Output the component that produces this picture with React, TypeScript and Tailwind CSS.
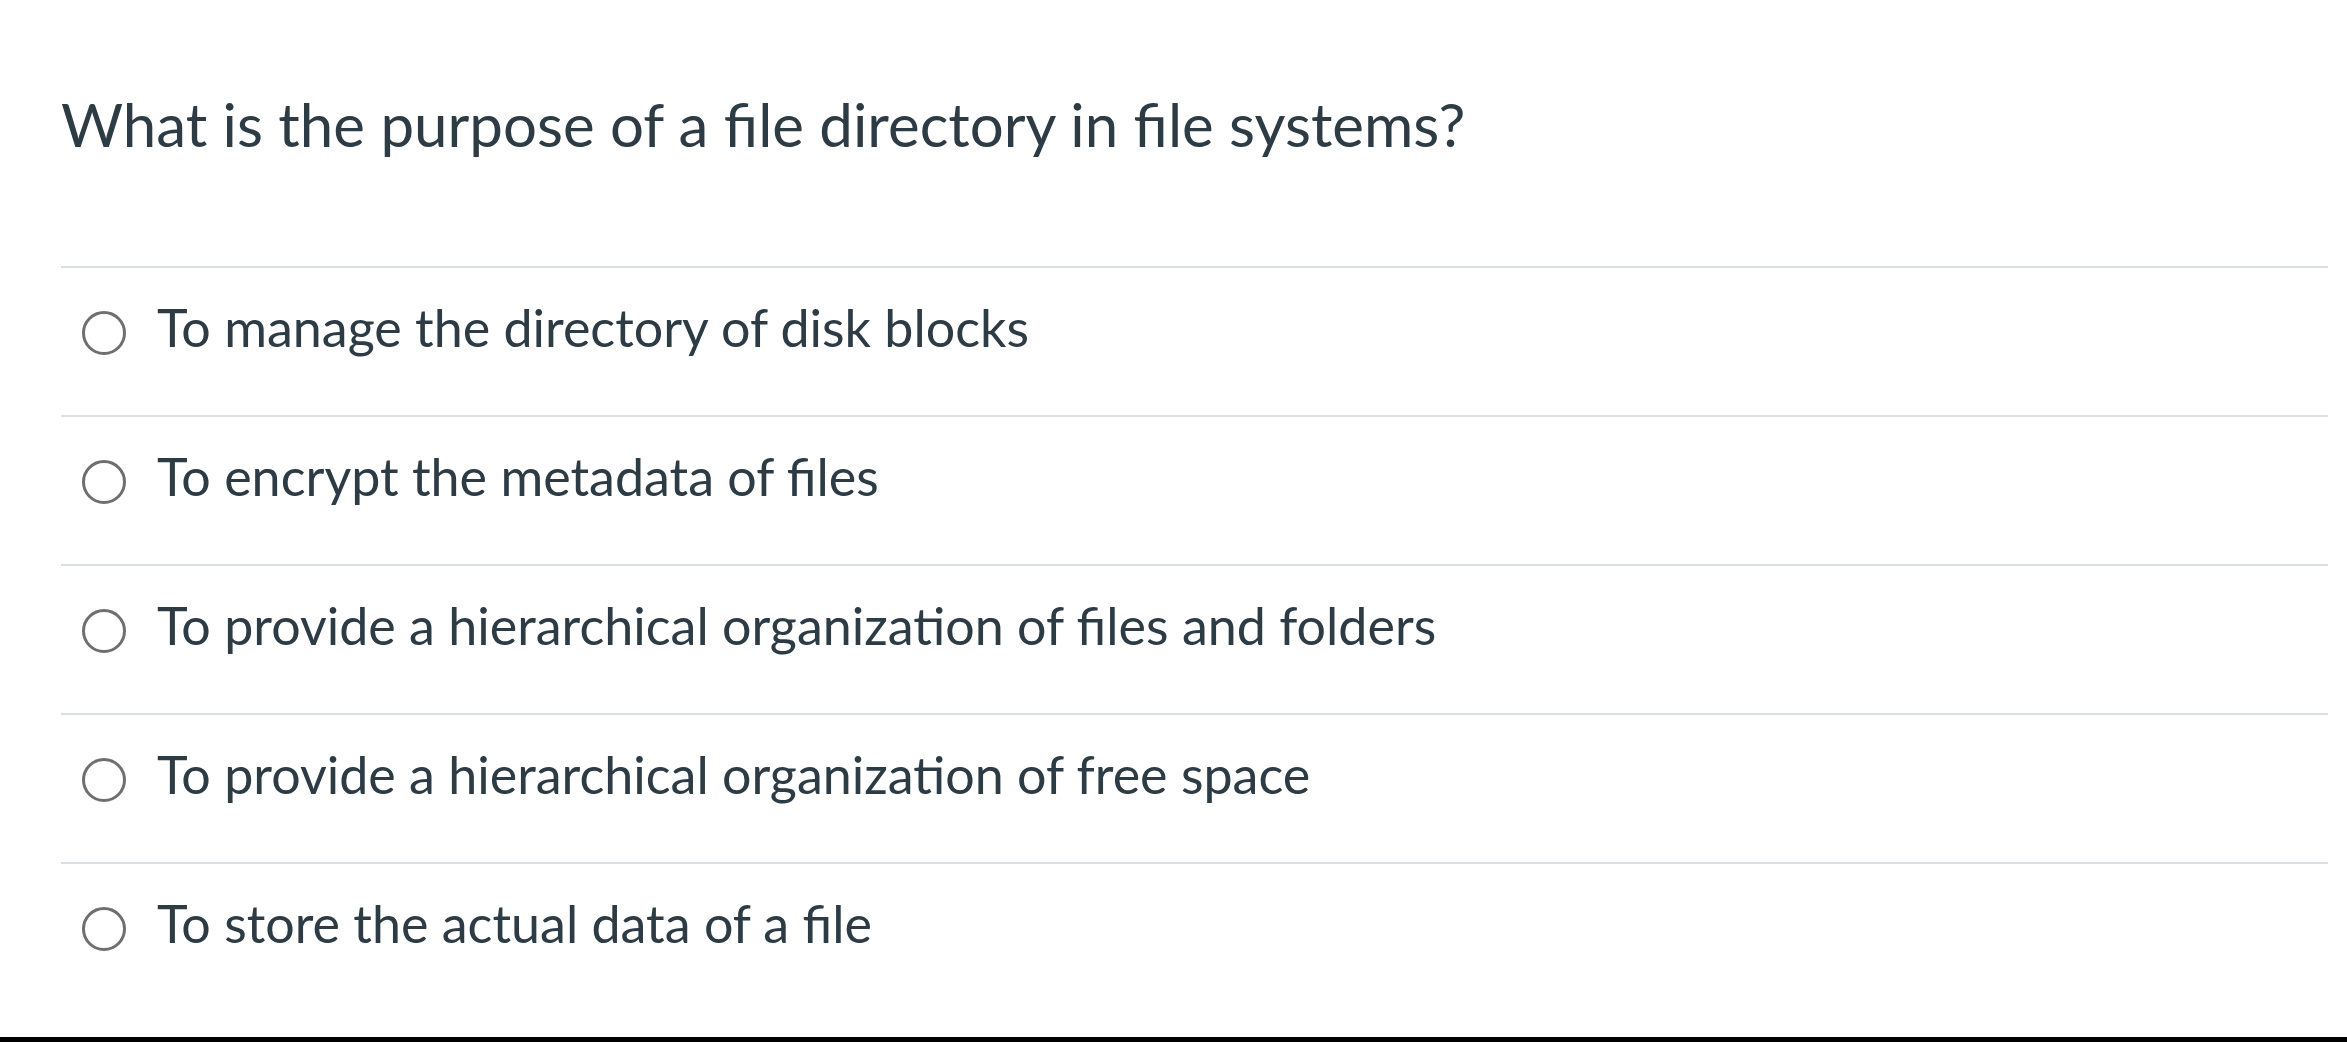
const options = [
  "To manage the directory of disk blocks",
  "To encrypt the metadata of files",
  "To provide a hierarchical organization of files and folders",
  "To provide a hierarchical organization of free space",
  "To store the actual data of a file",
];

export default function App() {
  return (
    <div
      className="flex h-[1042px] w-[2347px] flex-col overflow-hidden bg-white text-[#2d3b45]"
      style={{ fontFamily: "Lato, 'Noto Sans', sans-serif" }}
    >
      <div className="flex-1 pl-[61px] pr-[19px]">
        <h1 className="pt-[88px] pb-[106px] text-[60px] font-normal leading-[1.2]">
          What is the purpose of a file directory in file systems?
        </h1>
        <ul>
          {options.map((label) => (
            <li
              key={label}
              className="flex h-[149px] items-start border-t-2 border-[#dcdfe1] pt-[28px]"
            >
              <span className="ml-[21px] mt-[15px] h-[44px] w-[44px] shrink-0 rounded-full border-[3px] border-[#6f6f6f]" />
              <span className="ml-[31px] text-[52px] leading-[1.2]">{label}</span>
            </li>
          ))}
        </ul>
      </div>
      <div className="h-[5px] bg-black" />
    </div>
  );
}
